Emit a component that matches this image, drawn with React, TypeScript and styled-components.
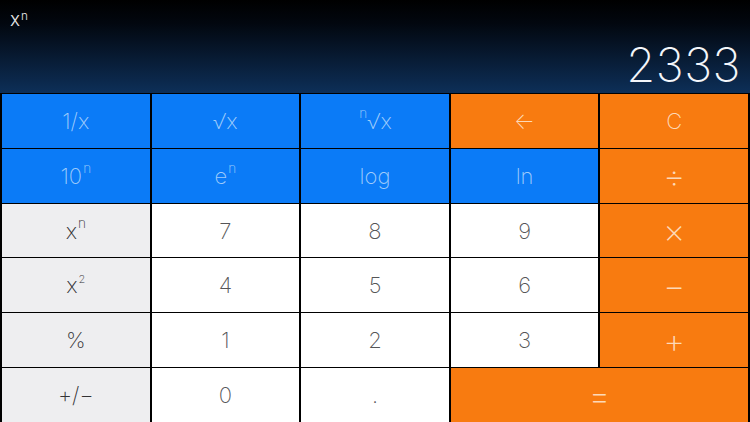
import React from 'react';
import styled, { createGlobalStyle } from 'styled-components';

type Kind = 'fn' | 'op' | 'side' | 'num';

interface IKey {
  label: React.ReactNode;
  kind: Kind;
  span?: number;
  big?: boolean;
}

const KEYS: IKey[] = [
  { label: '1/x', kind: 'fn' },
  { label: '√x', kind: 'fn' },
  { label: <><Sup>n</Sup>√x</>, kind: 'fn' },
  { label: '←', kind: 'op' },
  { label: 'C', kind: 'op' },
  { label: <>10<Sup>n</Sup></>, kind: 'fn' },
  { label: <>e<Sup>n</Sup></>, kind: 'fn' },
  { label: 'log', kind: 'fn' },
  { label: 'ln', kind: 'fn' },
  { label: '÷', kind: 'op', big: true },
  { label: <>x<Sup>n</Sup></>, kind: 'side' },
  { label: '7', kind: 'num' },
  { label: '8', kind: 'num' },
  { label: '9', kind: 'num' },
  { label: '×', kind: 'op', big: true },
  { label: <>x<Sup small>2</Sup></>, kind: 'side' },
  { label: '4', kind: 'num' },
  { label: '5', kind: 'num' },
  { label: '6', kind: 'num' },
  { label: '−', kind: 'op', big: true },
  { label: '%', kind: 'side' },
  { label: '1', kind: 'num' },
  { label: '2', kind: 'num' },
  { label: '3', kind: 'num' },
  { label: '+', kind: 'op', big: true },
  { label: '+/−', kind: 'side' },
  { label: '0', kind: 'num' },
  { label: '.', kind: 'num' },
  { label: '=', kind: 'op', span: 2, big: true },
];

export default function App() {
  return (
    <>
      <GlobalStyle />
      <Screen>
        <Display>
          <Mode>
            x<Sup>n</Sup>
          </Mode>
          <Value>2333</Value>
        </Display>
        <Pad>
          {KEYS.map((key, i) => (
            <Key key={i} kind={key.kind} span={key.span ?? 1} big={key.big}>
              {key.label}
            </Key>
          ))}
        </Pad>
      </Screen>
    </>
  );
}

const GlobalStyle = createGlobalStyle`
  html, body {
    margin: 0;
    padding: 0;
    background: #000;
  }
  body {
    font-family: Inter, "Helvetica Neue", "Liberation Sans", sans-serif;
  }
`;

const BG: Record<Kind, string> = {
  fn: '#0b7bf7',
  op: '#f87b10',
  side: '#eeeef0',
  num: '#ffffff',
};

const FG: Record<Kind, string> = {
  fn: '#9fcbfb',
  op: '#fdd9b8',
  side: '#333335',
  num: '#555557',
};

const Screen = styled.div`
  display: flex;
  flex-direction: column;
  width: 750px;
  height: 422px;
  overflow: hidden;
`;

const Display = styled.div`
  height: 93px;
  background: linear-gradient(180deg, #000 0%, #02070f 25%, #0d2f58 100%);
  display: flex;
  flex-direction: column;
  justify-content: space-between;
  padding: 9px 9px 2px 10px;
  box-sizing: border-box;
`;

const Mode = styled.div`
  color: #e6e6e6;
  font-size: 19px;
  font-weight: 300;
  line-height: 22px;
`;

const Value = styled.div`
  align-self: flex-end;
  color: #f4f6fa;
  font-size: 47px;
  font-weight: 200;
  line-height: 52px;
  letter-spacing: 0.5px;
`;

const Pad = styled.div`
  flex: 1;
  display: grid;
  grid-template-columns: repeat(5, 1fr);
  grid-template-rows: repeat(6, 1fr);
  column-gap: 2px;
  row-gap: 1px;
  padding: 1px 2px 0 2px;
  background: #000;
`;

const Key = styled.div<{ kind: Kind; span: number; big?: boolean }>`
  grid-column: span ${(p) => p.span};
  display: flex;
  align-items: center;
  justify-content: center;
  background: ${(p) => BG[p.kind]};
  color: ${(p) => FG[p.kind]};
  font-size: ${(p) => (p.big ? '34px' : '22px')};
  font-weight: 200;
`;

function Sup({ children, small }: { children: React.ReactNode; small?: boolean }) {
  return <SupText small={small}>{children}</SupText>;
}

const SupText = styled.span<{ small?: boolean }>`
  font-size: ${(p) => (p.small ? '0.5em' : '0.62em')};
  position: relative;
  top: -0.55em;
  margin-left: 1px;
`;
